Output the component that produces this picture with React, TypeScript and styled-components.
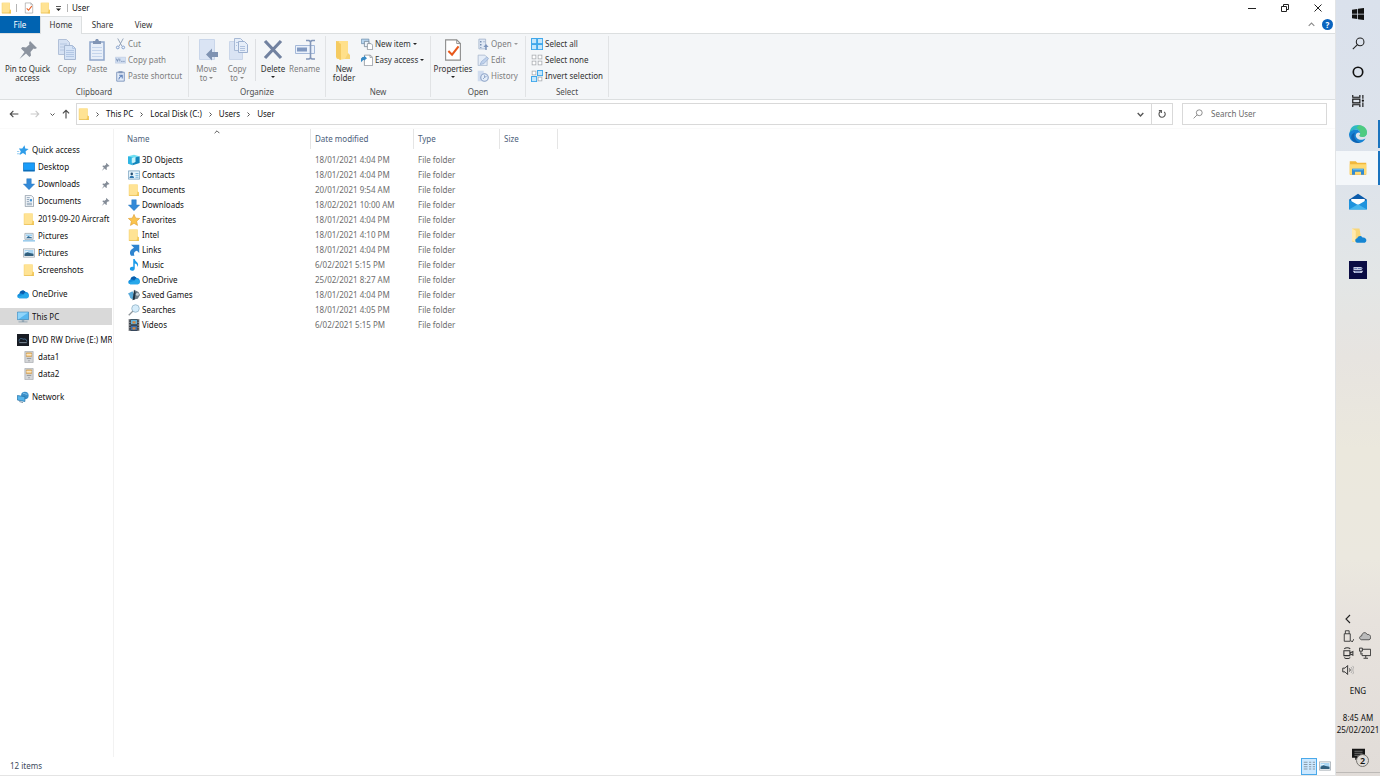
import React from "react";
import styled, { createGlobalStyle, css } from "styled-components";

const GlobalStyle = createGlobalStyle`
  *, *::before, *::after { box-sizing: border-box; }
  html, body { margin: 0; background: #fff; }
  body, button, input { font-family: "Noto Sans", "Open Sans", sans-serif; font-size: 8px; line-height: 10px; color: #111; }
  button { border: 0; padding: 0; margin: 0; background: none; }
  a { color: inherit; text-decoration: none; }
  ul { list-style: none; margin: 0; padding: 0; }
  svg { display: block; flex: none; }
`;

/* ---------- icons ---------- */

type IconProps = { w?: number; h?: number };
type SvgProps = IconProps & { box?: string; children: React.ReactNode };
const Svg = ({ w = 12, h = 12, box = "0 0 16 16", children }: SvgProps) => (
  <svg width={w} height={h} viewBox={box} fill="none" aria-hidden="true">{children}</svg>
);

const Folder = ({ w = 12, h = 12 }: IconProps) => (
  <Svg w={w} h={h}>
    <path d="M1 .5h12v9.500l1.500 1v4.500H1z" fill="#f8d77c" />
    <path d="M2 .5h10.500v12l-1.500 2.500H2z" fill="#ffe394" />
    <path d="M12.500 10l2 1v4.500H11l1.500-3z" fill="#f3c95c" />
    <path d="M1.500 15.300h13" stroke="#e8bd50" />
  </Svg>
);
const CheckPage = ({ w = 12, h = 12 }: IconProps) => (
  <Svg w={w} h={h} box="-1 -1 20 26">
    <path d="M1 1h12l4 4v18H1z" fill="#fff" stroke="#8d8d8d" strokeWidth="1.200" />
    <path d="M13 1v4h4" stroke="#8d8d8d" />
    <path d="M4 13l4 4 7-9" stroke="#e8591c" strokeWidth="2.200" />
  </Svg>
);
const PinBig = () => (
  <Svg w={24} h={24} box="0 0 24 24">
    <path d="M14 3l7 7-2 1-1.500-.5-3 3.500.5 3.500-1.500 1.500-3.500-3.500-6.500 5.500 5-7-3.500-3.500 1.500-1.500 3.500.5 3.500-3-.5-1.500z" fill="#8b939f" />
  </Svg>
);
const PinSmall = () => (
  <Svg w={9} h={9} box="2 1 20 20">
    <path d="M14 3l7 7-2 1-1.500-.5-3 3.500.5 3.500-1.500 1.500-3.500-3.500-6.500 5.500 5-7-3.500-3.500 1.500-1.500 3.500.5 3.500-3-.5-1.500z" fill="#848c97" />
  </Svg>
);
const CopyPages = () => (
  <Svg w={24} h={24} box="0 0 24 24">
    <path d="M3.500 1.500h8l3 3v12h-11z" fill="#d5e1f3" stroke="#b1c0d8" />
    <path d="M5 6h7M5 9h6M5 12h6" stroke="#b4c6e1" />
    <path d="M9.500 7.500h8l3 3v11h-11z" fill="#d5e3f6" stroke="#a7b8d2" />
    <path d="M17.500 7.500v3h3M11 12.500h8M11 14.500h8M11 16.500h8M11 18.500h8" stroke="#b3c7e4" />
  </Svg>
);
const Clipboard = () => (
  <Svg w={24} h={24} box="0 0 24 24">
    <path d="M5 4h14v18H5z" fill="#e8eff9" stroke="#8fa6ca" strokeWidth="1.500" />
    <path d="M8 3h2l1-2h2l1 2h2v3H8z" fill="#8195b5" />
    <path d="M7 9.500h10M7 12.500h10M7 15.500h10M7 18.500h10" stroke="#c5d5ec" />
  </Svg>
);
const Scissors = () => (
  <Svg w={11}>
    <path d="M4 0l6 11M12 0L6 11" stroke="#8b9bb3" strokeWidth="1.300" />
    <circle cx="4" cy="13" r="2" stroke="#7f9ccb" strokeWidth="1.400" />
    <circle cx="12" cy="13" r="2" stroke="#7f9ccb" strokeWidth="1.400" />
  </Svg>
);
const PathIcon = () => (
  <Svg w={11}>
    <path d="M.5 4h15v8.500H.5z" fill="#d3e0f3" stroke="#bccbe2" />
    <path d="M2 6l1.500 4L5 6M7 6v4M9 10h2M12 10h2" stroke="#6f87ad" strokeWidth="1.200" />
  </Svg>
);
const ShortcutIcon = () => (
  <Svg w={11}>
    <path d="M2.500 2.500h11v13h-11z" fill="#e3ecf9" stroke="#8198bd" strokeWidth="1.400" />
    <path d="M5 1h6v3H5z" fill="#8196b8" />
    <path d="M5.500 13c0-3 2-4 4-5M6 7h4.500v4.500" stroke="#5b7fb9" strokeWidth="1.500" />
  </Svg>
);
const MoveTo = () => (
  <Svg w={24} h={24} box="0 0 24 24">
    <path d="M4.500 1.500h15v20h-15z" fill="#dae4f4" stroke="#c9d6ea" />
    <path d="M11 16.500l6-6v3.500h6v5h-6v3.500z" fill="#7f93b2" />
  </Svg>
);
const CopyTo = () => (
  <Svg w={24} h={24} box="0 0 24 24">
    <path d="M4.500 3.500h13v18h-13z" fill="#d9e3f3" stroke="#cad6e9" />
    <path d="M9.500.5h6l3 3v9h-9z" fill="#e6eef9" stroke="#a7b9d5" />
    <path d="M13.500 3.500h6l3 3v8h-9z" fill="#e6eef9" stroke="#9db1d0" />
    <path d="M15 8.500h5M15 10.500h5M15 12.500h5M11 4.500h2M11 7.500h1" stroke="#b0c2de" />
  </Svg>
);
const DeleteX = () => (
  <Svg w={24} h={24} box="0 0 24 24">
    <path d="M4 3l16 17M20 3L4 20" stroke="#7282a0" strokeWidth="3.200" />
  </Svg>
);
const RenameIcon = () => (
  <Svg w={24} h={24} box="0 0 24 24">
    <path d="M2.500 7.500h19v8h-19z" fill="#eaf1fb" stroke="#a4b8d8" />
    <path d="M4 9.500h10v4H4z" fill="#8199c1" />
    <path d="M13 2.500h3l1.500 1 1.500-1h3M17.500 3v17M13 21h3l1.500-1 1.500 1h3" stroke="#8397b9" strokeWidth="1.600" />
  </Svg>
);
const NewFolder = () => (
  <Svg w={24} h={24} box="0 0 24 24">
    <path d="M4 3h12v12l2 2v4H5l-1-2z" fill="#f7d475" />
    <path d="M7 3h9v12l-3 6-6 1z" fill="#ffe08a" />
    <path d="M4 3l5 3v16l-5-3z" fill="#f5cb61" />
  </Svg>
);
const NewItem = () => (
  <Svg>
    <path d="M.5 1.500h10v6H.5z" fill="#b9d6ef" stroke="#6d8fae" />
    <path d="M4.500 4.500h6v7h-6z" fill="#eef4fa" stroke="#6c7f92" />
    <path d="M8.500 7.500h5l2 2v6h-7z" fill="#fff" stroke="#808890" />
  </Svg>
);
const EasyAccess = () => (
  <Svg>
    <path d="M4.500 1.500h8l3 3v11h-11z" fill="#fff" stroke="#858c94" />
    <path d="M12 1.500v3h3" stroke="#858c94" />
    <path d="M8 5.500L4 2v2H2L0 6v5l3-3h1v1z" fill="#378ac5" />
  </Svg>
);
const OpenIcon = () => (
  <Svg>
    <path d="M2.500 1.500h9v13h-9z" fill="#dfe8f5" stroke="#9cadc7" />
    <path d="M4 4h2v2H4zM4 8h2v2H4zM4 12h2v1H4z" fill="#778eb1" />
    <path d="M8 5h3" stroke="#9cadc7" />
    <path d="M11 16v-4H8.500L12 8l3.500 4H13v4z" fill="#7d95bb" />
  </Svg>
);
const EditIcon = () => (
  <Svg>
    <path d="M1.500 1.500h9l3 3v11h-12z" fill="#e5edf8" stroke="#a4b4cb" />
    <path d="M4 14l2-4 7-6 2.500 2L9 13z" fill="#c0d2ec" stroke="#8da5c9" strokeWidth=".8" />
  </Svg>
);
const HistoryIcon = () => (
  <Svg>
    <path d="M1 1h8v14H1z" fill="#d0dcef" />
    <circle cx="10" cy="10" r="5" fill="#e4edf9" stroke="#8da3c7" strokeWidth="1.500" />
    <path d="M10 7v3l-2 2M10 10l3-2" stroke="#7c94bb" />
  </Svg>
);
const tiles = [[0, 0], [8, 0], [0, 8], [8, 8]];
const Tiles = ({ on }: { on: number[] }) => (
  <Svg>
    {tiles.map(([x, y], i) => on.includes(i)
      ? <rect key={i} x={x + 0.7} y={y + 0.7} width="6.800" height="6.800" fill="#c5e7fc" stroke="#3ba5ea" strokeWidth="1.300" />
      : <rect key={i} x={x + 1.500} y={y + 1.500} width="5" height="5" fill="#fff" stroke="#a5a9ad" />)}
  </Svg>
);

const Star = () => (
  <Svg><path d="M8 .5l2.200 5 5.300.5-4 3.600 1.200 5.600L8 12.400l-4.700 2.800 1.200-5.600L.5 6l5.300-.5z" fill="#fbc44d" stroke="#dc9a2b" strokeWidth=".8" /></Svg>
);
const QuickStar = () => (
  <Svg>
    <path d="M10 1.500l1 4.500 4.500.5-4 3 .5 5-4-2.500-4.500 2.500L5 9.500 2.500 6 7 6z" fill="#2f9de9" />
    <path d="M0 13h4M0 10h3" stroke="#73bdf0" />
  </Svg>
);
const Desktop = () => (
  <Svg><path d="M.5 2.500h15v11H.5z" fill="#1a9dfa" stroke="#1372bd" /><path d="M1 12.500h14" stroke="#0d5b99" /></Svg>
);
const DownArrow = () => (
  <Svg><path d="M5 1h6v7h4.500L8 15.500.5 8H5z" fill="#338ad8" stroke="#2474bd" strokeWidth=".6" /></Svg>
);
const DocPage = () => (
  <Svg>
    <path d="M3 .5h8l3 3v12H3z" fill="#f3f6f9" stroke="#8a96a3" />
    <path d="M5 6h3M5 8.500h3M5 11h7M5 13h7M5 3.500h4" stroke="#7790a8" />
    <path d="M9 5.500h3v3H9z" fill="#3d8fd1" />
  </Svg>
);
const PicturesDevice = () => (
  <Svg>
    <path d="M2.500 4.500h11v8h-11z" fill="#e8f0f5" stroke="#98a4ae" />
    <path d="M4 6h8v2H4z" fill="#9bd0f3" /><path d="M4 11l3-3 2 1 3 1v1z" fill="#2f6a96" />
    <path d="M0 14.500h16" stroke="#70b6e3" strokeWidth="1.500" />
  </Svg>
);
const PicturesIcon = () => (
  <Svg>
    <path d="M.5 2.500h15v11H.5z" fill="#fff" stroke="#929ca5" />
    <path d="M2 4h12v8H2z" fill="#a9d5f2" /><path d="M2 9l4-2 3 1 5 1v3H2z" fill="#315f7d" /><path d="M3 6h4" stroke="#fff" />
  </Svg>
);
const Cloud = () => (
  <Svg>
    <path d="M3 13.500C-1 13 0 7.500 3.500 7.500 4 3 9 2 11.500 5.500c4.500-.5 6 6 2 8z" fill="#1490df" />
    <path d="M3 8C4 3 9 2 11.500 5.500 10 6 9 7 8.500 8.500 7 7.500 5 7 3 8z" fill="#0a5cab" />
    <path d="M3 13.500c-2-.5-2.500-1.500-2.500-1.500L9 8.500c1-2 5.500-2.500 6.500 1.500.5 2-.5 3.500-2.500 3.500z" fill="#28a8ea" />
  </Svg>
);
const ThisPc = () => (
  <Svg>
    <path d="M.5 1.500h15v10H.5z" fill="#58b7ef" stroke="#3c86b8" />
    <path d="M1 2h14L2 11H1z" fill="#8fd4fa" />
    <path d="M7 12h2v2H7zM2 14.500h12" stroke="#8199aa" />
  </Svg>
);
const Dvd = () => (
  <Svg>
    <path d="M0 0h16v16H0z" fill="#181c24" />
    <path d="M3 10c-1-4 3-5 5-3 3-1 5 0 5 3" stroke="#4f83ad" /><path d="M3 11.500h10" stroke="#9fb1c0" />
  </Svg>
);
const DataDrive = () => (
  <Svg>
    <path d="M2.500.5h11v15h-11z" fill="#d4d6d8" stroke="#a9adb1" />
    <path d="M4.500 2.500h7v5h-7z" fill="#f3c67a" stroke="#c48a3a" strokeWidth=".7" />
    <path d="M4.500 5h7" stroke="#fff" /><path d="M5 10h6M7 13h2" stroke="#85898d" />
  </Svg>
);
const NetworkIcon = () => (
  <Svg>
    <circle cx="10.500" cy="6" r="5" fill="#3a8fc9" /><path d="M8 3c3 0 4 2 6 1" stroke="#9fd6f5" />
    <path d="M.5 6l10 1.500v6.500l-10-2z" fill="#57b4ea" stroke="#2774aa" /><path d="M3 14l5 1.500" stroke="#5c788c" />
  </Svg>
);
const Cube = () => (
  <Svg>
    <path d="M0 3l8-2 7 2-8 3z" fill="#6fe0f2" /><path d="M0 3l6 1.500V15l-6-2z" fill="#2fb5e3" />
    <path d="M9 4.500L15.500 3v9L6 15v-3l3-1z" fill="#1387bd" /><path d="M5 5.500l5-1.500v6.500L5 11.500z" fill="#c8f3fa" />
  </Svg>
);
const Contacts = () => (
  <Svg>
    <path d="M.5 2.500h15v11H.5z" fill="#e5f3fb" stroke="#6d9bb9" />
    <circle cx="5" cy="6.500" r="1.700" fill="#274f72" /><path d="M2 12c0-4 6-4 6 0z" fill="#2d75ad" />
    <path d="M10 6h4M10 8.500h4M10 11h4" stroke="#5aa4d4" />
  </Svg>
);
const LinkArrow = () => (
  <Svg>
    <path d="M4 1h11v11l-3-3C8 10 7.500 12 8.500 15.500H4C1 11 3.500 7 8 5z" fill="#2f84cf" />
  </Svg>
);
const Music = () => (
  <Svg>
    <path d="M7 0h2c0 3 4.500 4 4.500 7.500 0 1.500-.8 3-.8 3 0-3-2-4.500-3.700-4.500v6.500c0 4-6.500 4-6.500.8 0-2.500 2.500-3.300 4.500-2.600z" fill="#1a9bea" />
  </Svg>
);
const SavedGames = () => (
  <Svg>
    <path d="M0 6l6-3 2 4-2 7-3-2-1-3z" fill="#58a9d9" /><path d="M8 1l6 3 2 4-3 5-5 1z" fill="#6d7c88" />
    <path d="M8 1l2 4-1 9-3 1z" fill="#1e3444" /><circle cx="12.500" cy="7" r="2" fill="#c3d0d9" />
  </Svg>
);
const SearchFolder = () => (
  <Svg>
    <circle cx="10" cy="6" r="5" fill="#d5ecfa" stroke="#9dbccf" strokeWidth="1.300" /><path d="M6.500 9.500L1 15" stroke="#8d9499" strokeWidth="1.800" />
  </Svg>
);
const Film = () => (
  <Svg>
    <path d="M1 0h14v16H1z" fill="#363b42" /><path d="M4 1h8v6H4z" fill="#5fb0dd" /><path d="M4 9h8v6H4z" fill="#3a6eac" />
    <path d="M6 3h4v3H6zM6 11h4v3H6z" fill="#d7863c" /><path d="M2.500 0v16M13.500 0v16" stroke="#d9dcdf" strokeDasharray="2 1.500" />
  </Svg>
);

const line = (d: string, color = "#444", width = 1.2) => <path d={d} stroke={color} strokeWidth={width} />;
const Chevron = ({ dir, color = "#555", w = 6, weight = 1.600 }: { dir: "up" | "down" | "left" | "right"; color?: string; w?: number; weight?: number }) => {
  const paths = { up: "M1 7l4-4 4 4", down: "M1 3l4 4 4-4", left: "M7 1L3 5l4 4", right: "M3 1l4 4-4 4" };
  return <Svg w={w} h={w} box="0 0 10 10">{line(paths[dir], color, weight)}</Svg>;
};
const Caret = ({ color = "#222" }: { color?: string }) => (
  <Svg w={4} h={4} box="0 0 4 4"><path d="M0 1h4L2 3z" fill={color} /></Svg>
);
const NavArrow = ({ kind }: { kind: "back" | "forward" | "up" }) => {
  const d = { back: "M15 8H2M7 3L2 8l5 5", forward: "M1 8h13M9 3l5 5-5 5", up: "M8 15V2M3 7l5-5 5 5" }[kind];
  return <Svg w={10} h={10}>{line(d, kind === "forward" ? "#c9c9c9" : "#4a4a4a", 1.800)}</Svg>;
};
const Refresh = () => (
  <Svg w={10} h={10}>
    {line("M11.500 4.500a5 5 0 1 1-6-.5M3 2.500h4v4", "#555", 1.800)}
  </Svg>
);
const Magnifier = ({ w = 10, color = "#777" }: { w?: number; color?: string }) => (
  <Svg w={w} h={w}><circle cx="10" cy="6" r="4.700" stroke={color} strokeWidth="1.300" />{line("M6.700 9.300L1 15", color, 1.300)}</Svg>
);

/* ---------- frame ---------- */

const Screen = styled.div`display: flex; min-height: 100vh; overflow: hidden;`;
const Explorer = styled.main`
  flex: 1; min-width: 0; display: flex; flex-direction: column;
  background: #fff; border-bottom: 1px solid #e4e4e4;
`;
const TitleBar = styled.header`display: flex; align-items: center; height: 16px; padding-left: 1px;`;
const QuickTools = styled.div`display: flex; align-items: center;`;
const ToolButton = styled.button<{ $w: number }>`width: ${p => p.$w}px; height: 16px; display: flex; align-items: center; justify-content: center;`;
const Tick = styled.span<{ $m: number }>`width: 1px; height: 8px; background: #b5b5b5; margin: 0 ${p => p.$m}px;`;
const WindowTitle = styled.h1`margin: 0; font-size: 8px; font-weight: 400;`;
const WindowButtons = styled.div`margin-left: auto; display: flex; padding-right: 1px;`;
const WindowButton = styled.button`width: 33px; height: 14px; display: grid; place-items: center;`;

const TabBar = styled.nav`display: flex; height: 18px; border-bottom: 1px solid #dcdfe0;`;
const Tab = styled.button<{ $kind?: "file" | "active" }>`
  width: 41px; height: 17px; color: #333;
  ${p => p.$kind === "file" && css`width: 40px; background: #0063b1; color: #fff;`}
  ${p => p.$kind === "active" && css`
    width: 42px; height: 18px; padding-bottom: 2px; background: #f4f6f8; border: 1px solid #dcdfe0; border-bottom: 0;
  `}
`;
const TabEnd = styled.div`margin-left: auto; display: flex; align-items: center; gap: 7px; padding-right: 2px;`;
const HelpButton = styled.button`
  width: 11px; height: 11px; border-radius: 50%; background: #0a64bf; color: #fff; font-weight: 700; line-height: 11px;
`;

const Ribbon = styled.div`
  display: flex; height: 66px; padding: 2px 0; background: #f4f6f8; border-bottom: 1px solid #dcdfe0;
`;
const Group = styled.section<{ $w: number }>`
  width: ${p => p.$w}px; display: flex; flex-direction: column; border-right: 1px solid #e1e3e5;
`;
const GroupBody = styled.div<{ $pad: number }>`flex: 1; display: flex; padding-left: ${p => p.$pad}px;`;
const GroupName = styled.h2`margin: 0; font-size: 8px; line-height: 11px; font-weight: 400; text-align: center; color: #4e4e4e;`;
const BigButton = styled.button<{ $w: number; $dim?: boolean }>`
  width: ${p => p.$w}px; display: flex; flex-direction: column; align-items: center; padding-top: 2px;
  line-height: 9px; white-space: nowrap; color: ${p => (p.$dim ? "#7d7d7d" : "#333")};
  & > svg:first-child { margin-bottom: 2px; }
  & > svg:last-child { margin-top: 2px; }
`;
const InlineLine = styled.span`display: flex; align-items: center; gap: 2px;`;
const Stack = styled.div<{ $pad: number }>`display: flex; flex-direction: column; padding-left: ${p => p.$pad}px;`;
const SmallButton = styled.button<{ $dim?: boolean }>`
  display: flex; align-items: center; gap: 2px; height: 16px; white-space: nowrap; color: ${p => (p.$dim ? "#7d7d7d" : "#333")};
`;
const Divider = styled.span`width: 1px; height: 42px; margin: 3px 1px 0 3px; background: #dddfe2;`;

const AddressRow = styled.div`display: flex; align-items: center; height: 28px; padding: 0 8px 0 7px;`;
const NavButton = styled.button<{ $w: number }>`width: ${p => p.$w}px; height: 20px; display: grid; place-items: center;`;
const AddressBox = styled.nav`
  flex: 1; height: 22px; display: flex; align-items: center; padding-left: 1px; border: 1px solid #d9d9d9;
`;
const Crumb = styled.a`padding: 0 6px; white-space: nowrap;`;
const RootCrumb = styled.a`display: flex; align-items: center; gap: 5px;`;
const AddressEnd = styled.div`margin-left: auto; display: flex; height: 100%;`;
const EndButton = styled.button`width: 21px; height: 100%; display: grid; place-items: center; & + & { border-left: 1px solid #d9d9d9; }`;
const SearchBox = styled.label`
  width: 145px; height: 22px; margin-left: 9px; padding-left: 10px; display: flex; align-items: center; gap: 8px; border: 1px solid #d9d9d9;
`;
const SearchInput = styled.input`
  flex: 1; min-width: 0; border: 0; outline: 0; padding: 0; background: none;
  &::placeholder { color: #6a6a6a; opacity: 1; }
`;

const Content = styled.div`flex: 1; display: flex; border-top: 1px solid #fafafa;`;
const Sidebar = styled.nav`
  width: 114px; padding-top: 12px; display: flex; flex-direction: column; gap: 6px; border-right: 1px solid #f2f2f2;
`;
const TreeSection = styled.ul<{ $h: number }>`
  height: ${p => p.$h}px; display: grid; grid-template-columns: minmax(0, 1fr); grid-auto-rows: 1fr; padding-right: 1px;
`;
const TreeRow = styled.a<{ $root?: boolean; $selected?: boolean }>`
  height: 100%; display: flex; align-items: center; gap: 3px; padding-left: ${p => (p.$root ? 17 : 23)}px;
  background: ${p => (p.$selected ? "#d9d9d9" : "transparent")};
`;
const TreeLabel = styled.span`flex: 1; min-width: 0; overflow: hidden; white-space: nowrap;`;
const PinSlot = styled.span`width: 11px;`;

const FilePane = styled.section`flex: 1; min-width: 0;`;
const FileTable = styled.table`
  table-layout: fixed; width: 444px; border-collapse: separate; border-spacing: 0;
`;
const HeadCell = styled.th`
  position: relative; height: 20px; padding: 0 0 0 4px; text-align: left; font-weight: 400; color: #4c607a; border-right: 1px solid #e5e5e5;
  &:first-child { padding-left: 13px; }
`;
const SortMark = styled.span`position: absolute; top: 0; left: 100px;`;
const Body = styled.tbody`&::before { content: ""; display: block; height: 3px; }`;
const Cell = styled.td`height: 15px; padding: 0 0 0 4px; white-space: nowrap; color: #6d6d6d;`;
const NameCell = styled.td`height: 15px; padding: 0 0 0 14px;`;
const FileLink = styled.a`display: flex; align-items: center; gap: 2px;`;

const StatusBar = styled.footer`display: flex; align-items: center; justify-content: space-between; height: 18px; padding: 0 2px 0 10px; color: #3c4a5c;`;
const ViewButtons = styled.div`display: flex; align-items: center;`;
const ViewButton = styled.button<{ $on?: boolean }>`
  width: 16px; height: 17px; display: grid; place-items: center;
  ${p => p.$on && css`background: #cce8ff; border: 1px solid #4aa9ea;`}
`;

/* ---------- taskbar ---------- */

const Taskbar = styled.aside`
  width: 45px; flex: none; display: flex; flex-direction: column; align-items: stretch; border-left: 1px solid #e2e4e6;
  background: linear-gradient(#dae1ec 0, #dde3eb 22%, #e3e6e6 36%, #e7e4e0 46%, #ebe8dd 58%, #ebe8df 72%, #e7e2dd 80%, #e1dcd8 100%);
`;
const SystemButton = styled.button`height: 29px; display: grid; place-items: center; padding-bottom: 1px;`;
const AppButton = styled.button<{ $state?: "open" | "focused" }>`
  position: relative; height: 34px; display: grid; place-items: center;
  background: ${p => (p.$state === "focused" ? "#f4f7fa" : "transparent")};
  ${p => p.$state && css`
    &::after {
      content: ""; position: absolute; right: 0; width: 2px; background: #1a73be;
      top: ${p.$state === "open" ? 3 : 0}px; bottom: ${p.$state === "open" ? 3 : 0}px;
    }
  `}
`;
const Apps = styled.div`display: flex; flex-direction: column; padding-top: 1px;`;
const Tray = styled.div`margin-top: auto; padding-left: 3px; display: grid; grid-template-columns: 17px 17px; grid-auto-rows: 17px;`;
const TrayButton = styled.button`display: grid; place-items: center;`;
const Language = styled.button`height: 22px; margin-top: 2px;`;
const Clock = styled.time`margin-top: 10px; line-height: 12px; text-align: center; white-space: nowrap;`;
const ActionCenter = styled.button`position: relative; height: 37px; display: grid; place-items: center; border-bottom: 1px solid #bdbab7; margin-bottom: 3px;`;
const Badge = styled.span`
  position: absolute; left: 20px; top: 18px; width: 13px; height: 13px; border-radius: 50%;
  border: 1px solid #77736f; background: #dedbd7; font-size: 9px; font-weight: 600; line-height: 11px; text-align: center;
`;

const sections: { h: number; rows: { label: string; icon: React.ReactNode; root?: boolean; pinned?: boolean; selected?: boolean }[] }[] = [
  { h: 138, rows: [
    { label: "Quick access", icon: <QuickStar />, root: true },
    { label: "Desktop", icon: <Desktop />, pinned: true },
    { label: "Downloads", icon: <DownArrow />, pinned: true },
    { label: "Documents", icon: <DocPage />, pinned: true },
    { label: "2019-09-20 Aircraft", icon: <Folder /> },
    { label: "Pictures", icon: <PicturesDevice /> },
    { label: "Pictures", icon: <PicturesIcon /> },
    { label: "Screenshots", icon: <Folder /> },
  ] },
  { h: 17, rows: [{ label: "OneDrive", icon: <Cloud />, root: true }] },
  { h: 17, rows: [{ label: "This PC", icon: <ThisPc />, root: true, selected: true }] },
  { h: 51, rows: [
    { label: "DVD RW Drive (E:) MRT", icon: <Dvd />, root: true },
    { label: "data1", icon: <DataDrive /> },
    { label: "data2", icon: <DataDrive /> },
  ] },
  { h: 17, rows: [{ label: "Network", icon: <NetworkIcon />, root: true }] },
];

const files: [string, string, React.ReactNode][] = [
  ["3D Objects", "18/01/2021 4:04 PM", <Cube />],
  ["Contacts", "18/01/2021 4:04 PM", <Contacts />],
  ["Documents", "20/01/2021 9:54 AM", <Folder />],
  ["Downloads", "18/02/2021 10:00 AM", <DownArrow />],
  ["Favorites", "18/01/2021 4:04 PM", <Star />],
  ["Intel", "18/01/2021 4:10 PM", <Folder />],
  ["Links", "18/01/2021 4:04 PM", <LinkArrow />],
  ["Music", "6/02/2021 5:15 PM", <Music />],
  ["OneDrive", "25/02/2021 8:27 AM", <Cloud />],
  ["Saved Games", "18/01/2021 4:04 PM", <SavedGames />],
  ["Searches", "18/01/2021 4:05 PM", <SearchFolder />],
  ["Videos", "6/02/2021 5:15 PM", <Film />],
];

const RibbonPanel = () => (
  <Ribbon>
    <Group $w={189}>
      <GroupBody $pad={4}>
        <BigButton $w={47}><PinBig /><span>Pin to Quick</span><span>access</span></BigButton>
        <BigButton $w={32} $dim><CopyPages /><span>Copy</span></BigButton>
        <BigButton $w={28} $dim><Clipboard /><span>Paste</span></BigButton>
        <Stack $pad={4}>
          <SmallButton $dim><Scissors />Cut</SmallButton>
          <SmallButton $dim><PathIcon />Copy path</SmallButton>
          <SmallButton $dim><ShortcutIcon />Paste shortcut</SmallButton>
        </Stack>
      </GroupBody>
      <GroupName>Clipboard</GroupName>
    </Group>
    <Group $w={137}>
      <GroupBody $pad={2}>
        <BigButton $w={31} $dim><MoveTo /><span>Move</span><InlineLine>to <Caret color="#888" /></InlineLine></BigButton>
        <BigButton $w={30} $dim><CopyTo /><span>Copy</span><InlineLine>to <Caret color="#888" /></InlineLine></BigButton>
        <Divider />
        <BigButton $w={32}><DeleteX /><span>Delete</span><Caret /></BigButton>
        <BigButton $w={31} $dim><RenameIcon /><span>Rename</span></BigButton>
      </GroupBody>
      <GroupName>Organize</GroupName>
    </Group>
    <Group $w={105}>
      <GroupBody $pad={4}>
        <BigButton $w={28}><NewFolder /><span>New</span><span>folder</span></BigButton>
        <Stack $pad={3}>
          <SmallButton><NewItem />New item<Caret /></SmallButton>
          <SmallButton><EasyAccess />Easy access<Caret /></SmallButton>
        </Stack>
      </GroupBody>
      <GroupName>New</GroupName>
    </Group>
    <Group $w={95}>
      <GroupBody $pad={2}>
        <BigButton $w={40}><CheckPage w={24} h={24} /><span>Properties</span><Caret /></BigButton>
        <Stack $pad={4}>
          <SmallButton $dim><OpenIcon />Open<Caret color="#999" /></SmallButton>
          <SmallButton $dim><EditIcon />Edit</SmallButton>
          <SmallButton $dim><HistoryIcon />History</SmallButton>
        </Stack>
      </GroupBody>
      <GroupName>Open</GroupName>
    </Group>
    <Group $w={83}>
      <GroupBody $pad={5}>
        <Stack $pad={0}>
          <SmallButton><Tiles on={[0, 1, 2, 3]} />Select all</SmallButton>
          <SmallButton><Tiles on={[]} />Select none</SmallButton>
          <SmallButton><Tiles on={[1, 2]} />Invert selection</SmallButton>
        </Stack>
      </GroupBody>
      <GroupName>Select</GroupName>
    </Group>
  </Ribbon>
);

const TaskbarPanel = () => (
  <Taskbar>
    <SystemButton aria-label="Start">
      <Svg><path d="M0 2.200l7-1v6.300H0zM8 1l8-1v7.500H8zM0 8.500h7v6.300l-7-1zM8 8.500h8V16l-8-1z" fill="#111" /></Svg>
    </SystemButton>
    <SystemButton aria-label="Search"><Magnifier w={13} color="#222" /></SystemButton>
    <SystemButton aria-label="Cortana"><Svg><circle cx="8" cy="8" r="6.300" stroke="#111" strokeWidth="2.200" /></Svg></SystemButton>
    <SystemButton aria-label="Task view">
      <Svg>{line("M1 0v3h9.500V0M1 16v-3h9.500v3M1 5.500h9.500v5H1zM14.500 0v5M14.500 10v6", "#111", 1.500)}<circle cx="14.500" cy="7.500" r="1.500" fill="#111" /></Svg>
    </SystemButton>
    <Apps>
      <AppButton $state="open" aria-label="Edge">
        <Svg w={18} h={18} box="0 0 24 24">
          <path d="M1 13C0 4 6 0 12 0c7 0 12 5 12 10 0 4-3 6-6 6-3 0-4-1-4-2s1-1 1-3-2-5-6-5c-4 0-7 3-8 7z" fill="#2fb9c4" />
          <path d="M14 0c6 1 10 5 10 10 0 4-3 6-6 6-3 0-4-1-4-2s1-1 1-3c0-3-2-6-5-7 1-2 2-3 4-4z" fill="#56cf70" opacity=".8" />
          <path d="M0 12c1-4 5-6 9-6 4 0 6 3 6 5-1-2-6-1-6 3s6 8 13 4c-2 4-6 6-10 6C5 24 0 19 0 12z" fill="#1683d4" />
          <path d="M8 10c-3 6 1 12 7 14C8 25 3 21 3 16c0-3 2-5 5-6z" fill="#0b4f9c" opacity=".6" />
        </Svg>
      </AppButton>
      <AppButton $state="focused" aria-label="File Explorer">
        <Svg w={18} h={18} box="0 0 24 24">
          <path d="M1 3h8l2 2h12v16H1z" fill="#f1b83d" /><path d="M1 7h22v13H1z" fill="#ffda71" />
          <path d="M4 21v-8h16v8h-4v-4H8v4z" fill="#318bd2" /><path d="M5 13h14v2H5z" fill="#62b6ed" />
        </Svg>
      </AppButton>
      <AppButton aria-label="Mail">
        <Svg w={18} h={18} box="0 0 24 24">
          <path d="M0 9l12-8 12 8v6H0z" fill="#0c5cab" /><path d="M3 8h18v9H3z" fill="#fff" />
          <path d="M0 9l12 7 12-7v13H0z" fill="#1f93dd" /><path d="M0 22l12-7 12 7z" fill="#46b5ee" />
        </Svg>
      </AppButton>
      <AppButton aria-label="OneDrive folder">
        <Svg w={18} h={18} box="0 0 24 24">
          <path d="M4 2h10l2 12v6H5l-1-2z" fill="#f8d679" /><path d="M4 2l5 3v16l-5-3z" fill="#ffe9ae" />
          <path d="M11 21c-4-1-3-6 0-6 1-4 6-4 7-1 5-1 7 5 3 7z" fill="#1585d2" />
        </Svg>
      </AppButton>
      <AppButton aria-label="Game">
        <Svg w={18} h={18} box="0 0 24 24">
          <path d="M0 0h24v24H0z" fill="#0a0c43" /><path d="M6 8h10l3 2h-2v2H6zM5 13h14l-2 3H7z" fill="#c5cbe0" /><path d="M7 10h4M12 10h5M8 14.500h7" stroke="#4b61a4" />
        </Svg>
      </AppButton>
    </Apps>
    <Tray>
      <TrayButton aria-label="Show hidden icons"><Chevron dir="left" w={10} color="#222" weight={1.100} /></TrayButton>
      <span />
      <TrayButton aria-label="USB device"><Svg>{line("M3 5h8v10H3zM4.500 5V1h5v4M12 14l1.500 2 2.500-4", "#333")}</Svg></TrayButton>
      <TrayButton aria-label="OneDrive status"><Svg><path d="M3 13c-3-1-3-5 .5-5C4 3 9 2 11 6c5-1 6 6 2.500 7z" fill="#bbb" stroke="#333" /></Svg></TrayButton>
      <TrayButton aria-label="Meet now"><Svg>{line("M2.500 5h8v6.500h-8zM10.500 8l4-2v5l-4-2M3 2.500c2-2 6-2 8 0M3 14c2 2 6 2 8 0", "#333", 1.400)}</Svg></TrayButton>
      <TrayButton aria-label="Network status"><Svg>{line("M5 3h10.500v8.500H4V8M.5 1.500h4v4h-4zM2.500 6v4M9 11.500v3M6 15h6", "#333", 1.300)}</Svg></TrayButton>
      <TrayButton aria-label="Volume"><Svg>{line("M1 5.500h3L7.500 2v12L4 10.500H1zM10 6c1 1 1 3 0 4", "#333", 1.300)}{line("M12 4c2 2 2 6 0 8M14 2.500c3 3 3 8 0 11", "#999", 1)}</Svg></TrayButton>
    </Tray>
    <Language>ENG</Language>
    <Clock>8:45 AM<br />25/02/2021</Clock>
    <ActionCenter aria-label="Notifications">
      <Svg w={13} h={13}><path d="M0 1h16v11H7l-3 3v-3H0z" fill="#161616" /><path d="M3 4h10M3 6.500h10M3 9h7" stroke="#888" /></Svg>
      <Badge>2</Badge>
    </ActionCenter>
  </Taskbar>
);

export default function App() {
  return (
    <Screen>
      <GlobalStyle />
      <Explorer>
        <TitleBar>
          <QuickTools>
            <Folder w={11} />
            <Tick $m={4} />
            <ToolButton $w={16} aria-label="Properties"><CheckPage /></ToolButton>
            <ToolButton $w={16} aria-label="New folder"><Folder w={11} /></ToolButton>
            <ToolButton $w={10} aria-label="Customize toolbar"><Svg w={5} h={5} box="0 0 6 6"><path d="M0 0h6v1H0zM0 3h6L3 6z" fill="#222" /></Svg></ToolButton>
            <Tick $m={4} />
          </QuickTools>
          <WindowTitle>User</WindowTitle>
          <WindowButtons>
            <WindowButton aria-label="Minimize"><Svg w={8} h={8} box="0 0 8 8">{line("M0 4.500h8", "#222", 1)}</Svg></WindowButton>
            <WindowButton aria-label="Restore"><Svg w={8} h={8} box="0 0 8 8">{line("M.5 2.500h5v5h-5zM2.500 2V.5h5v5H6", "#222", 1)}</Svg></WindowButton>
            <WindowButton aria-label="Close"><Svg w={8} h={8} box="0 0 8 8">{line("M.5.5l7 7M7.500.5l-7 7", "#222", 1)}</Svg></WindowButton>
          </WindowButtons>
        </TitleBar>
        <TabBar>
          <Tab $kind="file">File</Tab>
          <Tab $kind="active">Home</Tab>
          <Tab>Share</Tab>
          <Tab>View</Tab>
          <TabEnd>
            <Chevron dir="up" color="#8b8b8b" w={7} />
            <HelpButton aria-label="Help">?</HelpButton>
          </TabEnd>
        </TabBar>
        <RibbonPanel />
        <AddressRow>
          <NavButton $w={14} aria-label="Back"><NavArrow kind="back" /></NavButton>
          <NavButton $w={28} aria-label="Forward"><NavArrow kind="forward" /></NavButton>
          <NavButton $w={6} aria-label="Recent locations"><Chevron dir="down" w={5} weight={2} /></NavButton>
          <NavButton $w={21} aria-label="Up"><NavArrow kind="up" /></NavButton>
          <AddressBox aria-label="Address">
            <RootCrumb href="#" aria-label="Root"><Folder /><Chevron dir="right" w={5} weight={2} /></RootCrumb>
            {["This PC", "Local Disk (C:)", "Users"].map(name => (
              <React.Fragment key={name}><Crumb href="#">{name}</Crumb><Chevron dir="right" w={5} weight={2} /></React.Fragment>
            ))}
            <Crumb href="#">User</Crumb>
            <AddressEnd>
              <EndButton aria-label="Previous locations"><Chevron dir="down" w={7} weight={2} /></EndButton>
              <EndButton aria-label="Refresh"><Refresh /></EndButton>
            </AddressEnd>
          </AddressBox>
          <SearchBox>
            <Magnifier />
            <SearchInput type="search" placeholder="Search User" aria-label="Search User" />
          </SearchBox>
        </AddressRow>
        <Content>
          <Sidebar aria-label="Folders">
            {sections.map((section, i) => (
              <TreeSection key={i} $h={section.h}>
                {section.rows.map((row, j) => (
                  <li key={j}>
                    <TreeRow href="#" $root={row.root} $selected={row.selected}>
                      {row.icon}<TreeLabel>{row.label}</TreeLabel>
                      {row.pinned && <PinSlot><PinSmall /></PinSlot>}
                    </TreeRow>
                  </li>
                ))}
              </TreeSection>
            ))}
          </Sidebar>
          <FilePane>
            <FileTable>
              <colgroup><col width="197" /><col width="103" /><col width="86" /><col width="58" /></colgroup>
              <thead>
                <tr>
                  <HeadCell>Name<SortMark><Chevron dir="up" /></SortMark></HeadCell>
                  <HeadCell>Date modified</HeadCell><HeadCell>Type</HeadCell><HeadCell>Size</HeadCell>
                </tr>
              </thead>
              <Body>
                {files.map(([name, date, icon]) => (
                  <tr key={name}>
                    <NameCell><FileLink href="#">{icon}{name}</FileLink></NameCell>
                    <Cell>{date}</Cell><Cell>File folder</Cell><Cell />
                  </tr>
                ))}
              </Body>
            </FileTable>
          </FilePane>
        </Content>
        <StatusBar>
          <span>12 items</span>
          <ViewButtons>
            <ViewButton $on aria-label="Details view">
              <Svg w={12} h={12}>{line("M1 3h5M1 6h5M1 9h5M1 12h5M8 3h3M8 6h3M8 9h3M8 12h3M13 3h3M13 6h3M13 9h3M13 12h3", "#71818e", 1)}</Svg>
            </ViewButton>
            <ViewButton aria-label="Large icons view"><PicturesIcon /></ViewButton>
          </ViewButtons>
        </StatusBar>
      </Explorer>
      <TaskbarPanel />
    </Screen>
  );
}
